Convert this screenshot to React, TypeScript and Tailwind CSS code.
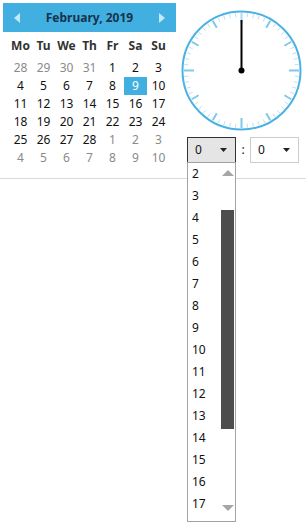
import React from 'react';

const DAY_NAMES = ['Mo', 'Tu', 'We', 'Th', 'Fr', 'Sa', 'Su'];

// 6 weeks shown for February 2019, with spill-over days from neighbouring months
const WEEKS: { day: number; muted?: boolean; selected?: boolean }[][] = [
    [{ day: 28, muted: true }, { day: 29, muted: true }, { day: 30, muted: true }, { day: 31, muted: true }, { day: 1 }, { day: 2 }, { day: 3 }],
    [{ day: 4 }, { day: 5 }, { day: 6 }, { day: 7 }, { day: 8 }, { day: 9, selected: true }, { day: 10 }],
    [{ day: 11 }, { day: 12 }, { day: 13 }, { day: 14 }, { day: 15 }, { day: 16 }, { day: 17 }],
    [{ day: 18 }, { day: 19 }, { day: 20 }, { day: 21 }, { day: 22 }, { day: 23 }, { day: 24 }],
    [{ day: 25 }, { day: 26 }, { day: 27 }, { day: 28 }, { day: 1, muted: true }, { day: 2, muted: true }, { day: 3, muted: true }],
    [{ day: 4, muted: true }, { day: 5, muted: true }, { day: 6, muted: true }, { day: 7, muted: true }, { day: 8, muted: true }, { day: 9, muted: true }, { day: 10, muted: true }],
];

const HOURS = Array.from({ length: 17 }, (_, i) => i + 2);

const Calendar: React.FC = () => (
    <div className="w-[173px] ml-[3px] mt-[3px]">
        <div className="h-[29px] bg-[#41afe0] flex items-center justify-between">
            <div className="w-[28px] h-full flex items-center justify-center">
                <svg width="6" height="10" viewBox="0 0 6 10"><path d="M6 0 L0 5 L6 10 Z" fill="#c4e8f8" /></svg>
            </div>
            <span className="text-[12px] font-bold text-[#17324d] leading-none">February, 2019</span>
            <div className="w-[28px] h-full flex items-center justify-center">
                <svg width="6" height="10" viewBox="0 0 6 10"><path d="M0 0 L6 5 L0 10 Z" fill="#c4e8f8" /></svg>
            </div>
        </div>
        <div className="ml-[6px] w-[161px]">
            <div className="grid grid-cols-7 h-[27px] items-center">
                {DAY_NAMES.map(d => (
                    <div key={d} className="text-center text-[12px] font-bold text-[#333]">{d}</div>
                ))}
            </div>
            {WEEKS.map((week, wi) => (
                <div key={wi} className="grid grid-cols-7 h-[18px]">
                    {week.map((c, ci) => (
                        <div
                            key={ci}
                            className={
                                c.selected
                                    ? 'flex items-center justify-center text-[12px] bg-[#41afe0] text-white'
                                    : c.muted
                                        ? 'flex items-center justify-center text-[12px] text-[#8a8a8a]'
                                        : 'flex items-center justify-center text-[12px] text-[#111]'
                            }
                        >
                            {c.day}
                        </div>
                    ))}
                </div>
            ))}
        </div>
    </div>
);

const Clock: React.FC = () => {
    const cx = 61.5;
    const cy = 61.5;
    const ticks = Array.from({ length: 60 }, (_, i) => {
        const a = (i * 6 * Math.PI) / 180;
        const major = i % 5 === 0;
        const quarter = i % 15 === 0;
        const len = quarter ? 10 : major ? 8 : 4;
        const r1 = 57.5;
        const r2 = r1 - len;
        return (
            <line
                key={i}
                x1={cx + r1 * Math.sin(a)}
                y1={cy - r1 * Math.cos(a)}
                x2={cx + r2 * Math.sin(a)}
                y2={cy - r2 * Math.cos(a)}
                stroke={i === 0 ? '#a9dbf2' : major ? '#7fc8ea' : '#b9e1f4'}
                strokeWidth={major ? 2 : 1}
            />
        );
    });
    return (
        <svg width="123" height="123" viewBox="0 0 123 123" className="ml-[4px] mt-[9px]">
            <circle cx={cx} cy={cy} r={59} fill="white" stroke="#4ab2e3" strokeWidth={2} />
            {ticks}
            <line x1={cx} y1={cy} x2={cx} y2={11} stroke="#000" strokeWidth={2} />
            <circle cx={cx} cy={cy} r={3} fill="#000" />
        </svg>
    );
};

const DownCaret: React.FC<{ color?: string }> = ({ color = '#222' }) => (
    <svg width="7" height="4" viewBox="0 0 7 4"><path d="M0 0 L7 0 L3.5 4 Z" fill={color} /></svg>
);

const HourList: React.FC = () => (
    <div className="absolute top-[25px] left-0 w-[49px] h-[360px] bg-white border border-[#a4a39b] overflow-hidden flex">
        <div className="flex-1 overflow-hidden">
            {HOURS.map(h => (
                <div key={h} className="h-[22px] flex items-center pl-[4px] text-[12px] text-[#111]">{h}</div>
            ))}
        </div>
        <div className="w-[13px] mr-[1px] flex flex-col items-center">
            <div className="h-[20px] flex items-center justify-center">
                <svg width="12" height="6" viewBox="0 0 12 6"><path d="M0 6 L6 0 L12 6 Z" fill="#a6a6a6" /></svg>
            </div>
            <div className="mt-[27px] w-full h-[219px] bg-[#4d4d4d]" />
            <div className="flex-1" />
            <div className="h-[16px] flex items-start justify-center">
                <svg width="12" height="6" viewBox="0 0 12 6"><path d="M0 0 L12 0 L6 6 Z" fill="#a6a6a6" /></svg>
            </div>
        </div>
    </div>
);

const App: React.FC = () => {
    return (
        <div className="w-[306px] h-[523px] bg-white overflow-hidden" style={{ fontFamily: '"Segoe UI", "Noto Sans", "Open Sans", sans-serif' }}>
            <div className="flex h-[179px] border-b border-[#d9d9d9]">
                <Calendar />
                <div className="flex flex-col">
                    <Clock />
                    <div className="flex items-center mt-[5px] ml-[11px]">
                        <div className="relative z-10">
                            <div className="w-[49px] h-[26px] border border-[#333] bg-[#e5e5e5] flex items-center justify-between pl-[7px] pr-[8px]">
                                <span className="text-[12px] text-[#111]">0</span>
                                <DownCaret />
                            </div>
                            <HourList />
                        </div>
                        <span className="w-[14px] text-center text-[12px] text-[#222]">:</span>
                        <div className="w-[49px] h-[26px] border border-[#cccccc] bg-white flex items-center justify-between pl-[7px] pr-[8px]">
                            <span className="text-[12px] text-[#111]">0</span>
                            <DownCaret />
                        </div>
                    </div>
                </div>
            </div>
        </div>
    );
};

export default App;
